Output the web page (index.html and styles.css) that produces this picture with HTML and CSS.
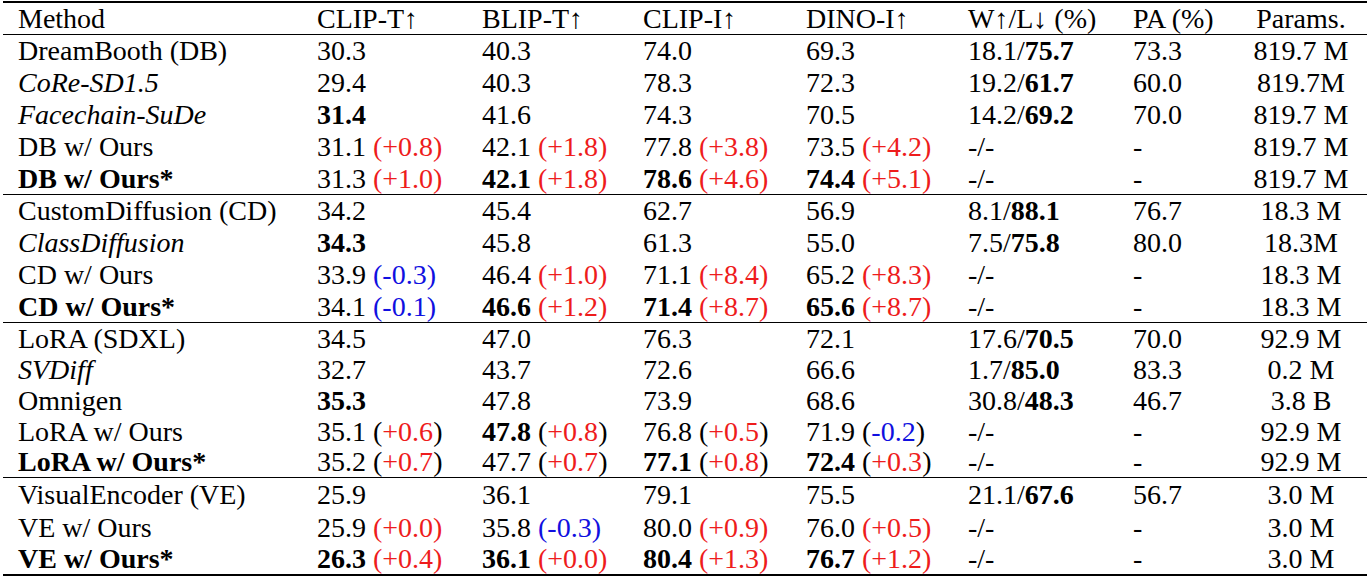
FILE: index.html
```html
<!DOCTYPE html>
<html>
  <head>
    <title>Results</title>
    <meta name="viewport" content="width=device-width,initial-scale=1">
    <link rel="stylesheet" href="styles.css">
  </head>
  <body>
    <table class="results">
      <colgroup>
        <col class="c-method">
        <col class="c-w165">
        <col class="c-w161">
        <col class="c-w163">
        <col class="c-w162">
        <col class="c-w165">
        <col class="c-pa">
        <col class="c-params">
      </colgroup>
      <thead>
        <tr><th>Method</th><th>CLIP-T&uarr;</th><th>BLIP-T&uarr;</th><th>CLIP-I&uarr;</th><th>DINO-I&uarr;</th><th>W&uarr;/L&darr; (%)</th><th>PA (%)</th><th class="params">Params.</th></tr>
      </thead>
      <tbody class="group">
        <tr><td>DreamBooth (DB)</td><td>30.3</td><td>40.3</td><td>74.0</td><td>69.3</td><td>18.1/<b>75.7</b></td><td>73.3</td><td class="params">819.7 M</td></tr>
        <tr><td><i>CoRe-SD1.5</i></td><td>29.4</td><td>40.3</td><td>78.3</td><td>72.3</td><td>19.2/<b>61.7</b></td><td>60.0</td><td class="params">819.7M</td></tr>
        <tr><td><i>Facechain-SuDe</i></td><td><b>31.4</b></td><td>41.6</td><td>74.3</td><td>70.5</td><td>14.2/<b>69.2</b></td><td>70.0</td><td class="params">819.7 M</td></tr>
        <tr><td>DB w/ Ours</td><td>31.1 <span class="up">(+0.8)</span></td><td>42.1 <span class="up">(+1.8)</span></td><td>77.8 <span class="up">(+3.8)</span></td><td>73.5 <span class="up">(+4.2)</span></td><td>-/-</td><td>-</td><td class="params">819.7 M</td></tr>
        <tr><td><b>DB w/ Ours*</b></td><td>31.3 <span class="up">(+1.0)</span></td><td><b>42.1</b> <span class="up">(+1.8)</span></td><td><b>78.6</b> <span class="up">(+4.6)</span></td><td><b>74.4</b> <span class="up">(+5.1)</span></td><td>-/-</td><td>-</td><td class="params">819.7 M</td></tr>
      </tbody>
      <tbody class="group">
        <tr><td>CustomDiffusion (CD)</td><td>34.2</td><td>45.4</td><td>62.7</td><td>56.9</td><td>8.1/<b>88.1</b></td><td>76.7</td><td class="params">18.3 M</td></tr>
        <tr><td><i>ClassDiffusion</i></td><td><b>34.3</b></td><td>45.8</td><td>61.3</td><td>55.0</td><td>7.5/<b>75.8</b></td><td>80.0</td><td class="params">18.3M</td></tr>
        <tr><td>CD w/ Ours</td><td>33.9 <span class="down">(-0.3)</span></td><td>46.4 <span class="up">(+1.0)</span></td><td>71.1 <span class="up">(+8.4)</span></td><td>65.2 <span class="up">(+8.3)</span></td><td>-/-</td><td>-</td><td class="params">18.3 M</td></tr>
        <tr><td><b>CD w/ Ours*</b></td><td>34.1 <span class="down">(-0.1)</span></td><td><b>46.6</b> <span class="up">(+1.2)</span></td><td><b>71.4</b> <span class="up">(+8.7)</span></td><td><b>65.6</b> <span class="up">(+8.7)</span></td><td>-/-</td><td>-</td><td class="params">18.3 M</td></tr>
      </tbody>
      <tbody class="group tight">
        <tr><td>LoRA (SDXL)</td><td>34.5</td><td>47.0</td><td>76.3</td><td>72.1</td><td>17.6/<b>70.5</b></td><td>70.0</td><td class="params">92.9 M</td></tr>
        <tr><td><i>SVDiff</i></td><td>32.7</td><td>43.7</td><td>72.6</td><td>66.6</td><td>1.7/<b>85.0</b></td><td>83.3</td><td class="params">0.2 M</td></tr>
        <tr><td>Omnigen</td><td><b>35.3</b></td><td>47.8</td><td>73.9</td><td>68.6</td><td>30.8/<b>48.3</b></td><td>46.7</td><td class="params">3.8 B</td></tr>
        <tr><td>LoRA w/ Ours</td><td>35.1 (<span class="up">+0.6</span>)</td><td><b>47.8</b> (<span class="up">+0.8</span>)</td><td>76.8 (<span class="up">+0.5</span>)</td><td>71.9 (<span class="down">-0.2</span>)</td><td>-/-</td><td>-</td><td class="params">92.9 M</td></tr>
        <tr><td><b>LoRA w/ Ours*</b></td><td>35.2 (<span class="up">+0.7</span>)</td><td>47.7 (<span class="up">+0.7</span>)</td><td><b>77.1</b> (<span class="up">+0.8</span>)</td><td><b>72.4</b> (<span class="up">+0.3</span>)</td><td>-/-</td><td>-</td><td class="params">92.9 M</td></tr>
      </tbody>
      <tbody class="group loose">
        <tr><td>VisualEncoder (VE)</td><td>25.9</td><td>36.1</td><td>79.1</td><td>75.5</td><td>21.1/<b>67.6</b></td><td>56.7</td><td class="params">3.0 M</td></tr>
        <tr><td>VE w/ Ours</td><td>25.9 <span class="up">(+0.0)</span></td><td>35.8 <span class="down">(-0.3)</span></td><td>80.0 <span class="up">(+0.9)</span></td><td>76.0 <span class="up">(+0.5)</span></td><td>-/-</td><td>-</td><td class="params">3.0 M</td></tr>
        <tr><td><b>VE w/ Ours*</b></td><td><b>26.3</b> <span class="up">(+0.4)</span></td><td><b>36.1</b> <span class="up">(+0.0)</span></td><td><b>80.4</b> <span class="up">(+1.3)</span></td><td><b>76.7</b> <span class="up">(+1.2)</span></td><td>-/-</td><td>-</td><td class="params">3.0 M</td></tr>
      </tbody>
    </table>
  </body>
</html>
```

FILE: styles.css
```css
body {
  margin: 0;
  background: #fff;
  color: #000;
  font-family: "Liberation Serif", "Times New Roman", serif;
  font-size: 28px;
}
.results {
  margin: 1px 3px;
  width: 1364px;
  table-layout: fixed;
  border-collapse: separate;
  border-spacing: 0;
}
.c-method { width: 314px; }
.c-w165 { width: 165px; }
.c-w161 { width: 161px; }
.c-w163 { width: 163px; }
.c-w162 { width: 162px; }
.c-pa { width: 102px; }
.c-params { width: 132px; }

th, td {
  padding: 0;
  text-align: left;
  font-weight: normal;
  white-space: nowrap;
  line-height: 32px;
  vertical-align: middle;
}
th:first-child, td:first-child {
  padding-left: 15px;
}
th {
  line-height: 31px;
  border-top: 2px solid #000;
  border-bottom: 1px solid #000;
}
/* rule under every group */
.group tr:last-child td {
  line-height: 31px;
  border-bottom: 1px solid #000;
}
.tight td {
  line-height: 31px;
}
.tight tr:last-child td {
  line-height: 30px;
}
.loose td {
  line-height: 33px;
}
.loose tr:last-child td {
  line-height: 30px;
  border-bottom: 2px solid #000;
}
.params {
  text-align: center;
}
.up {
  color: #ee1c1c;
}
.down {
  color: #1010e0;
}
```
